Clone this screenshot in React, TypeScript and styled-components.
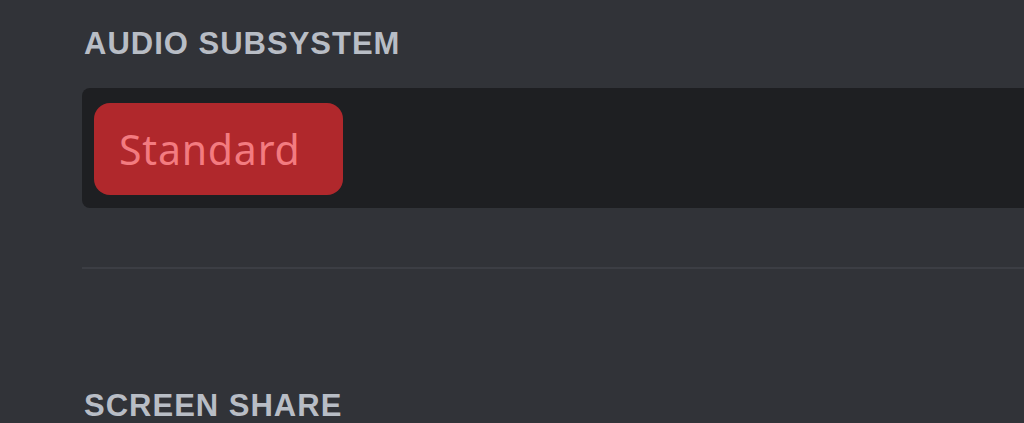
import React from "react"
import styled, { createGlobalStyle } from "styled-components"

const GlobalStyle = createGlobalStyle`
    html, body {
        margin: 0;
        padding: 0;
        background: #313338;
    }
`

const App = () => {
    return (
        <>
            <GlobalStyle />
            <Page>
                <Section>
                    <SectionHeader>Audio Subsystem</SectionHeader>
                    <Selector>
                        <Option data-selected={true}>Standard</Option>
                    </Selector>
                </Section>
                <Divider />
                <Section>
                    <SectionHeader>Screen Share</SectionHeader>
                </Section>
            </Page>
        </>
    )
}

const Page = styled.main`
    width: 1024px;
    height: 423px;
    overflow: hidden;
    box-sizing: border-box;
    padding: 28px 0 0 82px;
    background: #313338;
    font-family: "Noto Sans", "Open Sans", sans-serif;
`

const Section = styled.section`
    display: flex;
    flex-direction: column;
`

const SectionHeader = styled.h2`
    margin: 0 0 0 2px;
    font-family: "Liberation Sans", Arial, sans-serif;
    font-size: 31px;
    font-weight: 700;
    line-height: 31px;
    text-transform: uppercase;
    letter-spacing: 1px;
    color: #b8bdc5;
`

const Selector = styled.div`
    margin-top: 29px;
    height: 120px;
    box-sizing: border-box;
    padding: 15px 12px 13px;
    display: flex;
    align-items: stretch;
    background: #1e1f22;
    border-radius: 8px 0 0 8px;
`

const Option = styled.div`
    width: 249px;
    box-sizing: border-box;
    padding: 0 25px;
    display: flex;
    align-items: center;
    border-radius: 16px;
    font-size: 41px;
    font-weight: 400;
    letter-spacing: 0.8px;
    color: #b5bac1;

    &[data-selected=true] {
        background: #b0282c;
        color: #f37b80;
    }
`

const Divider = styled.hr`
    margin: 59px 0 121px 0;
    height: 2px;
    border: none;
    background: #3c3e44;
`

export default App
